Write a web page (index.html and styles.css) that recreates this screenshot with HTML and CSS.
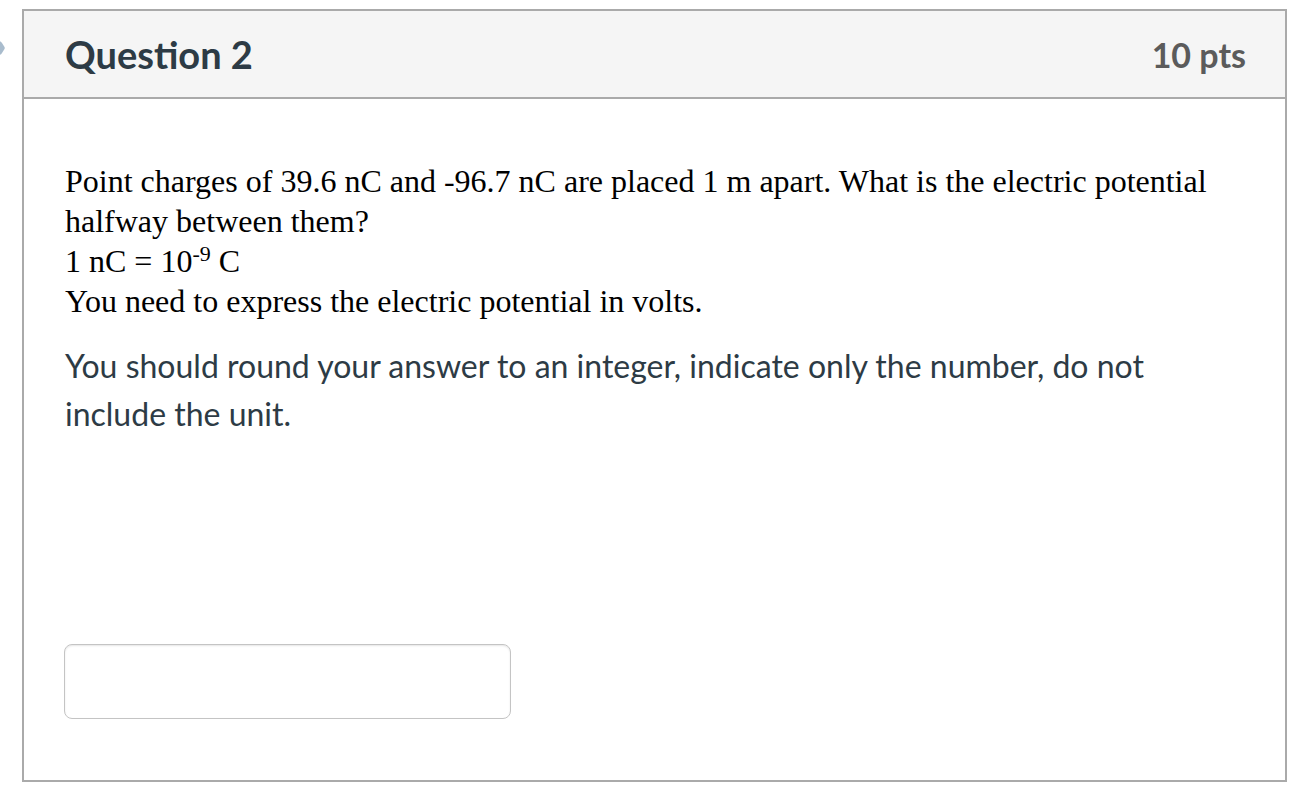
FILE: index.html
```html
<!DOCTYPE html>
<html>
<head>
<meta charset="utf-8">
<link rel="stylesheet" href="styles.css">
</head>
<body>
<div class="page">
  <svg class="nav-arrow" width="12" height="20" viewBox="0 0 12 20"><path d="M0 3 L5 3 Q7 3 8 5 L10.5 9 Q11 10 10.5 11 L8 15 Q7 17 5 17 L0 17 Z" fill="#a9bccd"/></svg>
  <div class="card">
    <div class="card-header">
      <h2 class="q-title">Question 2</h2>
      <span class="q-pts">10 pts</span>
    </div>
    <div class="card-body">
      <div class="q-text">
        <p class="serif">Point charges of 39.6 nC and -96.7 nC are placed 1 m apart. What is the electric potential halfway between them?<br>1 nC = 10<sup>-9</sup> C<br>You need to express the electric potential in volts.</p>
        <p class="sans">You should round your answer to an integer, indicate only the number, do not include the unit.</p>
      </div>
      <input class="answer" type="text">
    </div>
  </div>
</div>
</body>
</html>
```
FILE: styles.css
```css
html, body {
  margin: 0;
  padding: 0;
  background: #ffffff;
}
.page {
  position: relative;
  padding: 9px 0 0 22px;
}
.nav-arrow {
  position: absolute;
  left: -6px;
  top: 38px;
}
.card {
  width: 1261px;
  height: 769px;
  border: 2px solid #aaaaaa;
  display: flex;
  flex-direction: column;
}
.card-header {
  height: 86px;
  background: #f5f5f5;
  border-bottom: 2px solid #aaaaaa;
  display: flex;
  align-items: center;
  justify-content: space-between;
  padding: 0 39px 0 41px;
}
.q-title {
  margin: 0;
  font-family: Lato, "Liberation Sans", sans-serif;
  font-weight: 700;
  font-size: 38px;
  color: #2d3b45;
}
.q-pts {
  font-family: Lato, "Liberation Sans", sans-serif;
  font-weight: 700;
  font-size: 34px;
  color: #5b5b5b;
}
.card-body {
  padding: 62px 41px 0 41px;
}
.q-text p {
  margin: 0;
}
.serif {
  font-family: "Liberation Serif", "Times New Roman", serif;
  font-size: 32px;
  line-height: 40px;
  color: #000;
}
.serif sup {
  font-size: 22px;
  line-height: 0;
  vertical-align: 11px;
}
.sans {
  margin-top: 21px !important;
  font-family: Lato, "Liberation Sans", sans-serif;
  font-size: 32px;
  line-height: 48px;
  color: #2d3b45;
}
.answer {
  display: block;
  margin-top: 206px;
  box-sizing: border-box;
  width: 447px;
  height: 75px;
  border: 1px solid #c4c4c4;
  border-radius: 8px;
  box-shadow: inset 0 1px 2px rgba(0,0,0,0.1);
  background: #fff;
  margin-left: -1px;
}
```
